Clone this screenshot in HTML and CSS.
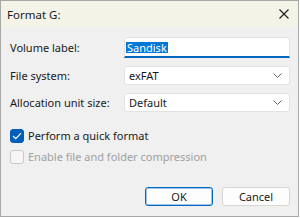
FILE: index.html
```html
<!DOCTYPE html>
<html lang="en">

<head>
    <meta charset="UTF-8">
    <title>Format G:</title>
    <link rel="stylesheet" href="styles.css">
</head>

<body>

    <div class="vindue">
        <header class="titel">
            <span>Format G:</span>
            <svg class="luk" width="10" height="10" viewBox="0 0 10 10">
                <path d="M0.5 0.5 L9.5 9.5 M9.5 0.5 L0.5 9.5" stroke="#1a1a1a" stroke-width="1.1" fill="none" />
            </svg>
        </header>

        <main class="indhold">
            <div class="felt">
                <label>Volume label:</label>
                <div class="input"><span class="markeret">Sandisk</span></div>
            </div>
            <div class="felt">
                <label>File system:</label>
                <div class="combo">exFAT
                    <svg width="9" height="5" viewBox="0 0 9 5">
                        <path d="M0.5 0.5 L4.5 4.5 L8.5 0.5" stroke="#666" stroke-width="1" fill="none" />
                    </svg>
                </div>
            </div>
            <div class="felt">
                <label>Allocation unit size:</label>
                <div class="combo">Default
                    <svg width="9" height="5" viewBox="0 0 9 5">
                        <path d="M0.5 0.5 L4.5 4.5 L8.5 0.5" stroke="#666" stroke-width="1" fill="none" />
                    </svg>
                </div>
            </div>

            <div class="valg">
                <div class="check">
                    <span class="boks tjekket">
                        <svg width="10" height="8" viewBox="0 0 10 8">
                            <path d="M1 4 L3.8 6.6 L9 1.2" stroke="#fff" stroke-width="1.2" fill="none" />
                        </svg>
                    </span>
                    Perform a quick format
                </div>
                <div class="check slukket">
                    <span class="boks"></span>
                    Enable file and folder compression
                </div>
            </div>

            <footer class="knapper">
                <button class="knap standard">OK</button>
                <button class="knap">Cancel</button>
            </footer>
        </main>
    </div>

</body>

</html>
```

FILE: styles.css
```css
body {
    margin: 0;
    background: #ffffff;
    font-family: "Noto Sans", "Liberation Sans", sans-serif;
    font-size: 11px;
    color: #1a1a1a;
}

.vindue {
    width: 297px;
    height: 215px;
    border: 1px solid #a8a8a8;
    background: #f0f0f0;
    display: flex;
    flex-direction: column;
}

.titel {
    height: 26px;
    background: #f3f3e7;
    display: flex;
    align-items: center;
    justify-content: space-between;
    padding: 0 9px 0 6px;
    font-size: 11.5px;
}

.indhold {
    flex: 1;
    padding: 10px 8px 0 9px;
    display: flex;
    flex-direction: column;
}

.felt {
    display: flex;
    align-items: center;
    margin-bottom: 8px;
}

.felt label {
    width: 114px;
}

.input {
    flex: 1;
    height: 18px;
    background: #fff;
    border: 1px solid #e3e3e3;
    border-bottom: 2px solid #0067c0;
    border-radius: 3px 3px 0 0;
    display: flex;
    align-items: center;
    padding-left: 1px;
}

.markeret {
    background: #0078d7;
    color: #fff;
    padding: 0 1px;
    line-height: 11px;
    height: 11px;
}

.combo {
    flex: 1;
    height: 17px;
    background: #fff;
    border: 1px solid #e3e3e3;
    border-radius: 3px;
    display: flex;
    align-items: center;
    justify-content: space-between;
    padding: 0 7px 0 4px;
}

.valg {
    margin-top: 8px;
    display: flex;
    flex-direction: column;
    gap: 6px;
}

.check {
    display: flex;
    align-items: center;
    gap: 4px;
}

.boks {
    width: 12px;
    height: 12px;
    border: 1px solid #c8c8c8;
    border-radius: 3px;
    background: #f6f6f6;
    display: flex;
    align-items: center;
    justify-content: center;
}

.tjekket {
    background: #005fb8;
    border-color: #005fb8;
}

.slukket {
    color: #a0a0a0;
}

.knapper {
    margin-top: auto;
    margin-bottom: 10px;
    display: flex;
    justify-content: flex-end;
    gap: 9px;
}

.knap {
    width: 68px;
    height: 19px;
    background: #fdfdfd;
    border: 1px solid #d6d6d6;
    border-radius: 3px;
    font-family: inherit;
    font-size: 11px;
    color: #1a1a1a;
    padding: 0;
}

.standard {
    border: 1px solid #0067c0;
    box-shadow: inset 0 0 0 1px #9fc6ea;
}
```
